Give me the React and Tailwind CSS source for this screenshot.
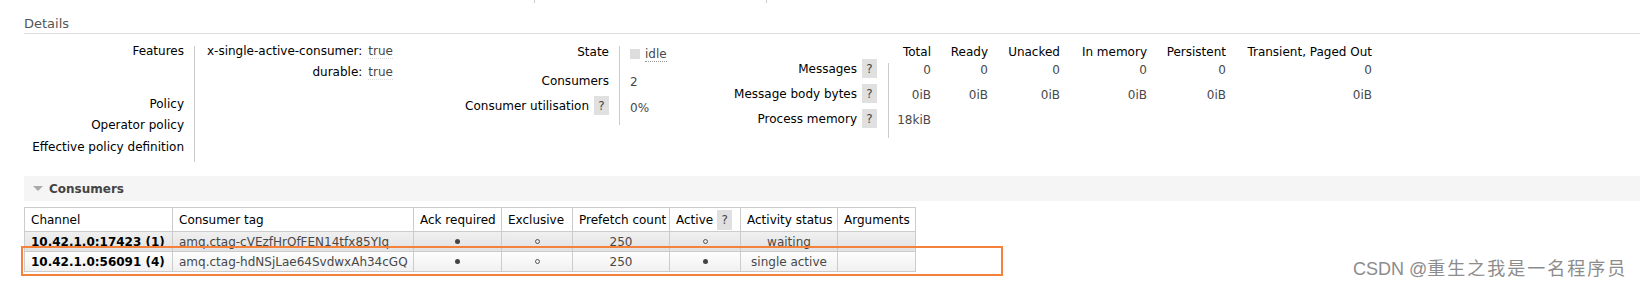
import React from 'react';

const Help = ({ className = '' }) => (
  <span className={`inline-flex w-[15px] h-[19px] items-center justify-center bg-[#e0e0e0] text-[#444] ${className}`}>?</span>
);

const Dotted = ({ children, color = 'border-[#ddd]' }) => (
  <span className={`border-b border-dotted ${color} leading-[14px]`}>{children}</span>
);

const Filled = () => <span className="inline-block w-[5px] h-[5px] rounded-full bg-[#444]" />;
const Hollow = () => <span className="inline-block w-[5px] h-[5px] rounded-full border border-[#555]" />;

const msgCols = ['w-[42px]', 'w-[57px]', 'w-[72px]', 'w-[87px]', 'w-[79px]', 'w-[146px]'];
const msgHeads = ['Total', 'Ready', 'Unacked', 'In memory', 'Persistent', 'Transient, Paged Out'];

function ValueRow({ values }) {
  return (
    <div className="flex h-[25px] leading-[25px] text-[#484848]">
      {msgCols.map((w, i) => (
        <div key={i} className={`${w} text-right`}>{values[i] || ''}</div>
      ))}
    </div>
  );
}

const rows = [
  { channel: '10.42.1.0:17423 (1)', tag: 'amq.ctag-cVEzfHrOfFEN14tfx85YIq', active: false, status: 'waiting', bg: 'bg-gradient-to-b from-[#f0f0f0] to-[#e2e2e2]' },
  { channel: '10.42.1.0:56091 (4)', tag: 'amq.ctag-hdNSjLae64SvdwxAh34cGQ', active: true, status: 'single active', bg: 'bg-gradient-to-b from-[#fdfdfd] to-[#f1f1f1]' },
];

export default function App() {
  return (
    <div className="w-[1640px] h-[288px] bg-white relative overflow-hidden font-['DejaVu_Sans',sans-serif] text-[12px] text-black">
      {/* remnants of the section above */}
      <div className="flex h-[3px]">
        <div className="ml-[534px] w-px bg-[#ccc]" />
        <div className="ml-[231px] w-px bg-[#ccc]" />
      </div>

      <div className="ml-[24px] h-[31px] border-b border-[#ddd] pt-[13px] text-[13px] leading-[15px] text-[#555]">Details</div>

      {/* details */}
      <div className="flex items-start h-[142px] ml-[24px]">
        {/* group 1 */}
        <div className="w-[170px] pr-[10px] text-right">
          <div className="mt-[7px] h-[21px] leading-[21px]">Features</div>
          <div className="h-[20px]" />
          <div className="mt-[11px] h-[22px] leading-[22px]">Policy</div>
          <div className="h-[21px] leading-[21px]">Operator policy</div>
          <div className="mt-[1px] h-[21px] leading-[21px]">Effective policy definition</div>
        </div>
        <div className="w-px mt-[12px] h-[116px] bg-[#ccc]" />
        <div className="w-[245px] pl-[12px]">
          <div className="mt-[7px] grid grid-cols-[max-content_max-content]">
            <div className="h-[21px] leading-[21px] text-right">x-single-active-consumer:</div>
            <div className="h-[21px] flex items-center pl-[6px] text-[#484848]"><Dotted>true</Dotted></div>
            <div className="h-[20px] leading-[20px] text-right">durable:</div>
            <div className="h-[20px] flex items-center pl-[6px] text-[#484848]"><Dotted>true</Dotted></div>
          </div>
        </div>

        {/* group 2 */}
        <div className="w-[179px] pr-[10px] text-right">
          <div className="mt-[7px] h-[22px] leading-[22px]">State</div>
          <div className="mt-[7px] h-[22px] leading-[22px]">Consumers</div>
          <div className="mt-[3px] h-[21px] flex items-center justify-end">
            <span>Consumer utilisation</span>
            <Help className="ml-[5px]" />
          </div>
        </div>
        <div className="w-px mt-[12px] h-[79px] bg-[#ccc]" />
        <div className="w-[60px] pl-[10px] text-[#484848]">
          <div className="mt-[9px] h-[22px] flex items-center">
            <span className="w-[10px] h-[10px] bg-[#ddd]" />
            <span className="ml-[5px]"><Dotted color="border-[#999]">idle</Dotted></span>
          </div>
          <div className="mt-[6px] h-[22px] leading-[22px]">2</div>
          <div className="mt-[4px] h-[22px] leading-[22px]">0%</div>
        </div>

        {/* group 3 */}
        <div className="flex flex-col">
          <div className="mt-[7px] h-[22px] leading-[22px] flex">
            <div className="w-[209px]" />
            {msgCols.map((w, i) => (
              <div key={i} className={`${w} text-right`}>{msgHeads[i]}</div>
            ))}
          </div>
          <div className="-mt-[7px] flex items-start">
            <div className="w-[208px] pr-[11px]">
              {['Messages', 'Message body bytes', 'Process memory'].map((l) => (
                <div key={l} className="h-[25px] flex items-center justify-end">
                  <span>{l}</span>
                  <Help className="ml-[5px]" />
                </div>
              ))}
            </div>
            <div className="w-px mt-[7px] h-[75px] bg-[#ccc]" />
            <div className="mt-[2px]">
              <ValueRow values={['0', '0', '0', '0', '0', '0']} />
              <ValueRow values={['0iB', '0iB', '0iB', '0iB', '0iB', '0iB']} />
              <ValueRow values={['18kiB']} />
            </div>
          </div>
        </div>
      </div>

      {/* consumers */}
      <div className="ml-[24px] h-[25px] bg-[#f5f5f5] flex items-center">
        <span className="ml-[9px] w-0 h-0 border-l-[5px] border-r-[5px] border-t-[5px] border-l-transparent border-r-transparent border-t-[#aaa]" />
        <span className="ml-[6px] font-bold text-[#444]">Consumers</span>
      </div>

      <div className="mt-[6px] ml-[24px] w-fit grid grid-cols-[148px_241px_88px_71px_97px_71px_97px_78px] border-l border-t border-[#ccc]">
        {['Channel', 'Consumer tag', 'Ack required', 'Exclusive', 'Prefetch count'].map((h) => (
          <div key={h} className="h-[24px] pl-[6px] flex items-center border-r border-b border-[#ccc] whitespace-nowrap">{h}</div>
        ))}
        <div className="h-[24px] pl-[6px] flex items-center border-r border-b border-[#ccc]">
          <span>Active</span>
          <Help className="ml-[4px] h-[20px]" />
        </div>
        {['Activity status', 'Arguments'].map((h) => (
          <div key={h} className="h-[24px] pl-[6px] flex items-center border-r border-b border-[#ccc] whitespace-nowrap">{h}</div>
        ))}

        {rows.map((r) => (
          <React.Fragment key={r.channel}>
            <div className={`h-[20px] pl-[6px] flex items-center font-bold border-r border-b border-[#ccc] whitespace-nowrap ${r.bg}`}>{r.channel}</div>
            <div className={`h-[20px] pl-[6px] flex items-center text-[#484848] border-r border-b border-[#ccc] whitespace-nowrap ${r.bg}`}>{r.tag}</div>
            <div className={`h-[20px] flex items-center justify-center border-r border-b border-[#ccc] ${r.bg}`}><Filled /></div>
            <div className={`h-[20px] flex items-center justify-center border-r border-b border-[#ccc] ${r.bg}`}><Hollow /></div>
            <div className={`h-[20px] flex items-center justify-center text-[#484848] border-r border-b border-[#ccc] ${r.bg}`}>250</div>
            <div className={`h-[20px] flex items-center justify-center border-r border-b border-[#ccc] ${r.bg}`}>{r.active ? <Filled /> : <Hollow />}</div>
            <div className={`h-[20px] flex items-center justify-center text-[#484848] border-r border-b border-[#ccc] whitespace-nowrap ${r.bg}`}>{r.status}</div>
            <div className={`h-[20px] border-r border-b border-[#ccc] ${r.bg}`} />
          </React.Fragment>
        ))}
      </div>

      {/* highlight box drawn over the second consumer row */}
      <div className="absolute left-[21px] top-[246px] w-[982px] h-[30px] border-2 border-[#f5813a]" />

      {/* watermark */}
      <div className="absolute left-[1353px] top-[258px] leading-[22px] text-[18px] text-[#8c8c8c] whitespace-nowrap font-['Liberation_Sans','Noto_Sans_CJK_SC',sans-serif]">
        CSDN @<span className="tracking-[2px]">重生之我是一名程序员</span>
      </div>
    </div>
  );
}
